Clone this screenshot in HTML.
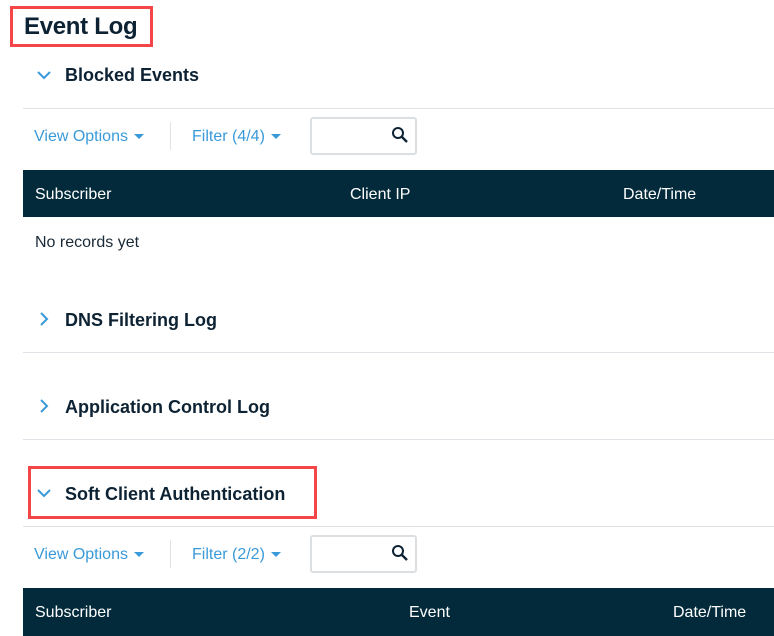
<!DOCTYPE html>
<html><head><style>
body{margin:0;width:774px;height:636px;overflow:hidden;background:#fff;font-family:"Liberation Sans",sans-serif;position:relative;color:#0d2233}
.a{position:absolute;white-space:nowrap}
.box{position:absolute;border:3px solid #f44548;box-sizing:border-box}
.h{font-weight:bold;font-size:18px;color:#0d2233;line-height:20px}
.div{position:absolute;left:23px;right:0;height:1px;background:#dfe3e7}
.lnk{font-size:16px;color:#3a9ad9;line-height:20px}
.car{display:inline-block;width:0;height:0;border-left:5px solid transparent;border-right:5px solid transparent;border-top:5px solid #3a9ad9;vertical-align:middle;margin-left:6px}
.sep{position:absolute;left:170px;width:1px;height:28px;background:#dfe3e7}
.sb{position:absolute;left:310px;width:107px;height:38px;border:2px solid #dcdfe2;border-radius:3px;box-sizing:border-box}
.th{position:absolute;left:23px;right:0;height:47px;background:#022a3a}
.th span{position:absolute;top:15px;color:#fff;font-size:16px;line-height:20px}
</style></head><body>
<div class="box" style="left:10px;top:6px;width:143px;height:41px"></div>
<div class="a" style="left:24px;top:12px;font-size:24px;letter-spacing:-0.3px;font-weight:bold;line-height:30px;color:#0d2233">Event Log</div>

<svg class="a" style="left:36px;top:69px" width="16" height="12"><path d="M2 3 L8 9 L14 3" stroke="#3a9ad9" stroke-width="2" fill="none"/></svg>
<div class="a h" style="left:65px;top:65px">Blocked Events</div>
<div class="div" style="top:108px"></div>
<div class="a lnk" style="left:34px;top:127px">View Options<span class="car"></span></div>
<div class="sep" style="top:122px"></div>
<div class="a lnk" style="left:192px;top:127px">Filter (4/4)<span class="car"></span></div>
<div class="sb" style="top:117px"></div>
<svg class="a" style="left:391px;top:126px" width="18" height="18"><circle cx="7" cy="7" r="5" stroke="#0d2233" stroke-width="2" fill="none"/><path d="M11 11 L16 16" stroke="#0d2233" stroke-width="2.4"/></svg>
<div class="th" style="top:170px"><span style="left:12px">Subscriber</span><span style="left:327px">Client IP</span><span style="left:600px">Date/Time</span></div>
<div class="a" style="left:35px;top:233px;font-size:16px;line-height:20px;color:#1a2a36">No records yet</div>

<svg class="a" style="left:38px;top:311px" width="12" height="16"><path d="M3 2 L9 8 L3 14" stroke="#3a9ad9" stroke-width="2" fill="none"/></svg>
<div class="a h" style="left:65px;top:310px">DNS Filtering Log</div>
<div class="div" style="top:352px"></div>
<svg class="a" style="left:38px;top:398px" width="12" height="16"><path d="M3 2 L9 8 L3 14" stroke="#3a9ad9" stroke-width="2" fill="none"/></svg>
<div class="a h" style="left:65px;top:397px">Application Control Log</div>
<div class="div" style="top:439px"></div>

<div class="box" style="left:28px;top:466px;width:289px;height:53px"></div>
<svg class="a" style="left:36px;top:487px" width="16" height="12"><path d="M2 3 L8 9 L14 3" stroke="#3a9ad9" stroke-width="2" fill="none"/></svg>
<div class="a h" style="left:65px;top:484px">Soft Client Authentication</div>
<div class="div" style="top:526px"></div>
<div class="a lnk" style="left:34px;top:545px">View Options<span class="car"></span></div>
<div class="sep" style="top:540px"></div>
<div class="a lnk" style="left:192px;top:545px">Filter (2/2)<span class="car"></span></div>
<div class="sb" style="top:535px"></div>
<svg class="a" style="left:391px;top:544px" width="18" height="18"><circle cx="7" cy="7" r="5" stroke="#0d2233" stroke-width="2" fill="none"/><path d="M11 11 L16 16" stroke="#0d2233" stroke-width="2.4"/></svg>
<div class="th" style="top:588px;height:48px"><span style="left:12px">Subscriber</span><span style="left:386px">Event</span><span style="left:650px">Date/Time</span></div>
</body></html>
